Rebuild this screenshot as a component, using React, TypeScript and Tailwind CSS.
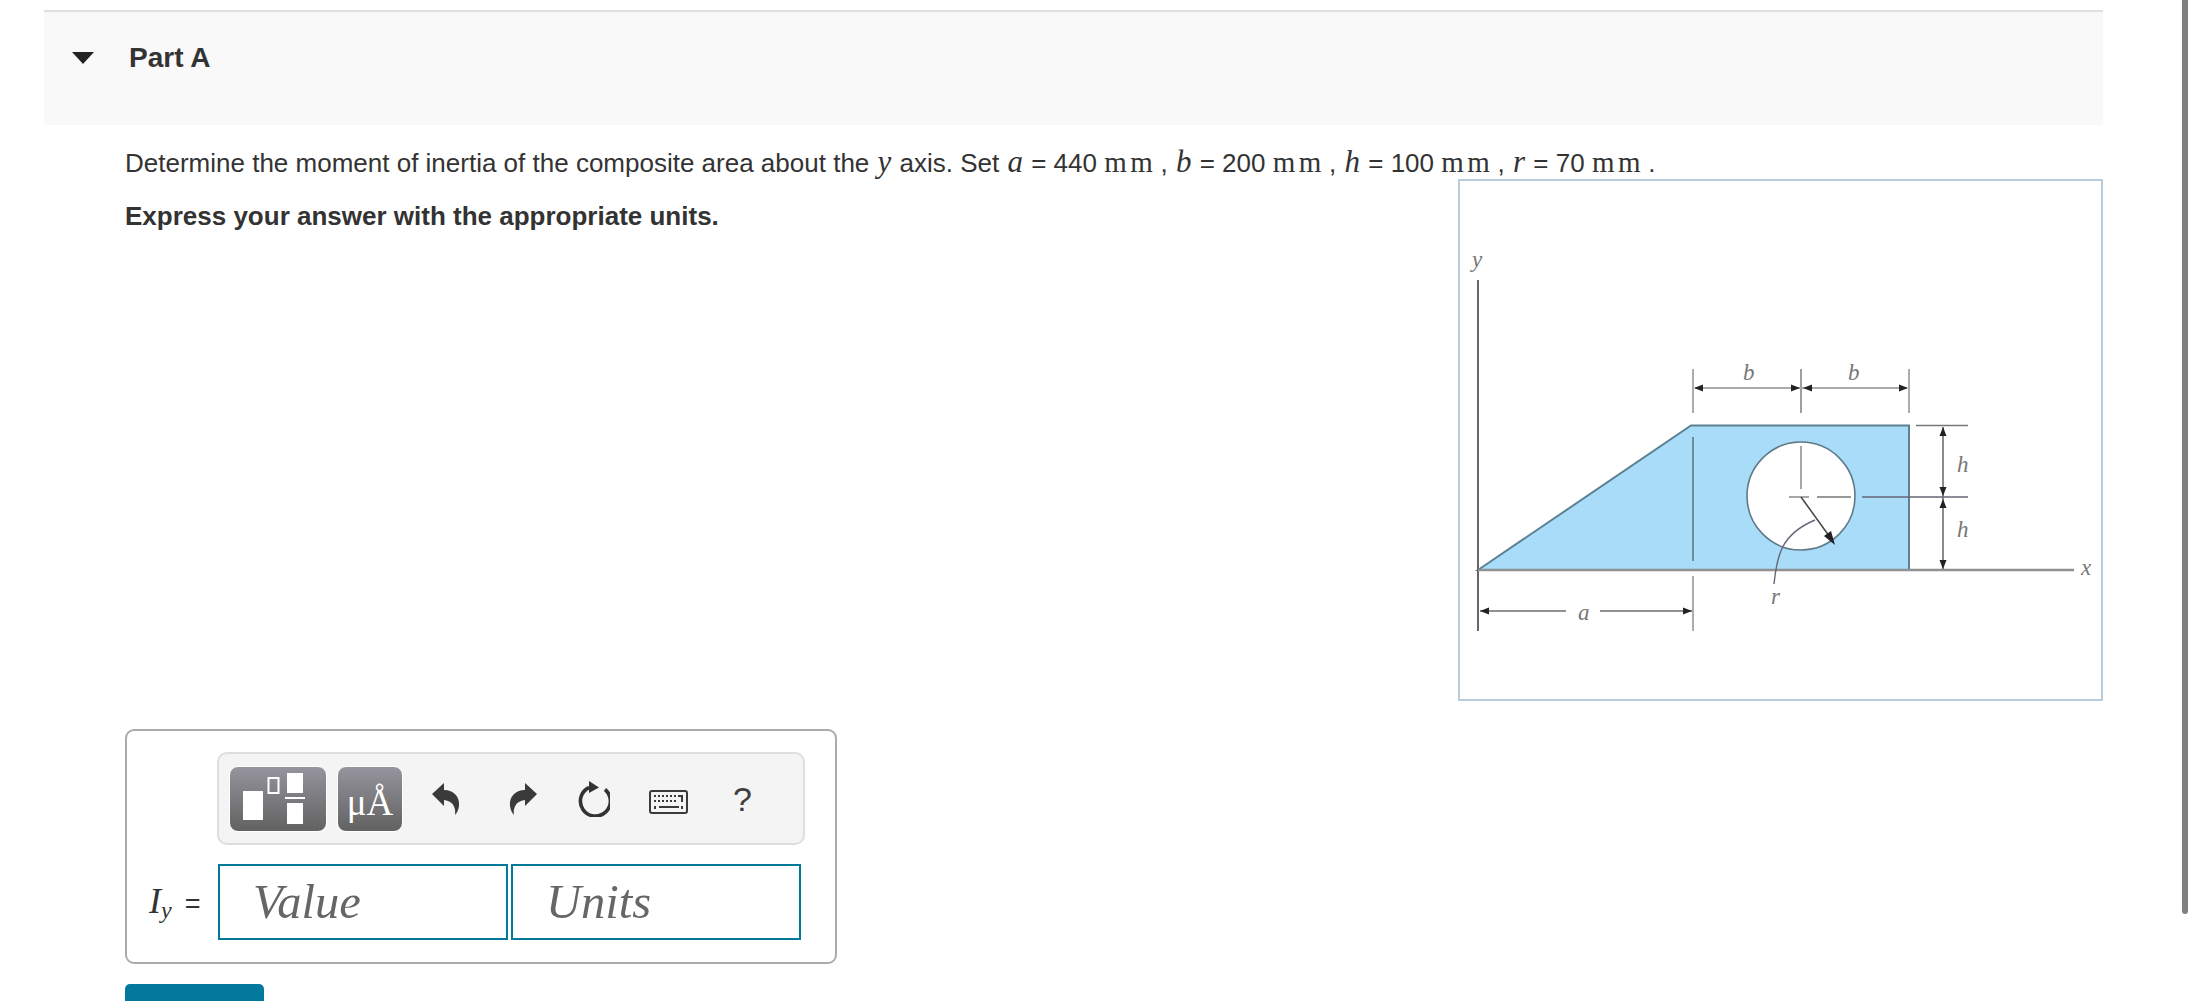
import React from "react";

const M = ({ children }: { children: React.ReactNode }) => (
  <span className="mx-[1px] font-['Liberation_Serif',serif] text-[31px] italic leading-none">{children}</span>
);
const U = ({ children }: { children: React.ReactNode }) => (
  <span className="mr-[-3px] font-['Liberation_Serif',serif] text-[29px] leading-none tracking-[3.5px]">{children}</span>
);

function Figure() {
  const dim = "#6e6e6e";
  const lbl = { fontFamily: "'Liberation Serif', serif", fontStyle: "italic", fontSize: 23, fill: "#777" } as const;
  const Ar = ({ x, y, dir }: { x: number; y: number; dir: "l" | "r" | "u" | "d" }) => {
    const p =
      dir === "l" ? `${x},${y} ${x + 9},${y - 3.5} ${x + 9},${y + 3.5}` :
      dir === "r" ? `${x},${y} ${x - 9},${y - 3.5} ${x - 9},${y + 3.5}` :
      dir === "u" ? `${x},${y} ${x - 3.5},${y + 9} ${x + 3.5},${y + 9}` :
      `${x},${y} ${x - 3.5},${y - 9} ${x + 3.5},${y - 9}`;
    return <polygon points={p} fill="#222" />;
  };
  return (
    <svg width="641" height="518" viewBox="1458 182 641 518" className="block">
      <defs>
        <filter id="soft" x="-5%" y="-5%" width="110%" height="110%">
          <feGaussianBlur stdDeviation="0.6" />
        </filter>
      </defs>
      <g filter="url(#soft)">
        <path d="M1476 571 L1689 426.5 L1907 426.5 L1907 571 Z" fill="#a8dcf8" stroke="#5b8193" strokeWidth="2" />
        <circle cx="1799" cy="497" r="54" fill="#fff" stroke="#5f7a88" strokeWidth="1.6" />
        <line x1="1476" y1="281" x2="1476" y2="632" stroke="#555" strokeWidth="1.8" />
        <line x1="1476" y1="571" x2="2072" y2="571" stroke="#8f9193" strokeWidth="2.5" />
        <line x1="1691" y1="438" x2="1691" y2="562" stroke="#6f8b99" strokeWidth="2" />
        <line x1="1691" y1="577" x2="1691" y2="632" stroke="#999" strokeWidth="1.6" />
        <line x1="1691" y1="370" x2="1691" y2="414" stroke="#999" strokeWidth="1.6" />
        <line x1="1799" y1="370" x2="1799" y2="414" stroke="#888" strokeWidth="1.6" />
        <line x1="1907" y1="370" x2="1907" y2="414" stroke="#999" strokeWidth="1.6" />
        <line x1="1693" y1="389" x2="1905" y2="389" stroke="#aaa" strokeWidth="2" />
        <Ar x={1692} y={389} dir="l" />
        <Ar x={1798} y={389} dir="r" />
        <Ar x={1801} y={389} dir="l" />
        <Ar x={1906} y={389} dir="r" />
        <line x1="1914" y1="426.5" x2="1966" y2="426.5" stroke="#777" strokeWidth="1.4" />
        <line x1="1860" y1="498" x2="1966" y2="498" stroke="#667" strokeWidth="1.4" />
        <line x1="1941" y1="428" x2="1941" y2="570" stroke={dim} strokeWidth="1.6" />
        <Ar x={1941} y={428} dir="u" />
        <Ar x={1941} y={497} dir="d" />
        <Ar x={1941} y={500} dir="u" />
        <Ar x={1941} y={570} dir="d" />
        <line x1="1799" y1="447" x2="1799" y2="490" stroke="#777" strokeWidth="1.3" />
        <line x1="1787" y1="498" x2="1807" y2="498" stroke="#777" strokeWidth="1.3" />
        <line x1="1815" y1="498" x2="1849" y2="498" stroke="#777" strokeWidth="1.3" />
        <line x1="1799" y1="498" x2="1830" y2="541" stroke="#444" strokeWidth="1.5" />
        <polygon points="1833,546 1822,537 1829,532" fill="#222" />
        <path d="M1813 521 C1780 535 1775 555 1772 585" fill="none" stroke="#667" strokeWidth="1.4" />
        <line x1="1478" y1="612" x2="1564" y2="612" stroke={dim} strokeWidth="1.6" />
        <line x1="1598" y1="612" x2="1690" y2="612" stroke={dim} strokeWidth="1.6" />
        <Ar x={1478} y={612} dir="l" />
        <Ar x={1690} y={612} dir="r" />
      </g>
      <text x="1470" y="268" style={lbl}>y</text>
      <text x="1741" y="381" style={lbl}>b</text>
      <text x="1846" y="381" style={lbl}>b</text>
      <text x="1955" y="473" style={lbl}>h</text>
      <text x="1955" y="538" style={lbl}>h</text>
      <text x="2079" y="576" style={lbl}>x</text>
      <text x="1769" y="605" style={lbl}>r</text>
      <text x="1576" y="621" style={lbl}>a</text>
    </svg>
  );
}

function Tmpl() {
  return (
    <svg width="96" height="64" viewBox="0 0 96 64" className="block">
      <rect x="13" y="24" width="20" height="29" fill="#fff" />
      <rect x="38.5" y="11" width="10" height="15" fill="none" stroke="#fff" strokeWidth="2" />
      <rect x="57" y="6" width="16" height="20" fill="#fff" />
      <rect x="55" y="30" width="20" height="2" fill="#fff" />
      <rect x="57" y="36" width="16" height="21" fill="#fff" />
    </svg>
  );
}

function Toolbar() {
  return (
    <div className="ml-[-1px] flex h-[93px] w-[588px] items-center rounded-[10px] border-2 border-[#dedede] bg-[#f4f4f4] pl-[10px]">
      <div className="h-[66px] w-[98px] shrink-0 rounded-[9px] border border-white bg-gradient-to-b from-[#96949d] to-[#626262]">
        <Tmpl />
      </div>
      <div className="ml-[10px] flex h-[66px] w-[66px] shrink-0 items-end justify-center rounded-[9px] border border-white bg-gradient-to-b from-[#96949d] to-[#626262] pb-[6px] font-['Liberation_Serif',serif] text-[37px] leading-[44px] text-white">
        μÅ
      </div>
      <div className="ml-[29px] flex items-center">
        <svg width="28" height="32" viewBox="0 0 28 32" className="block">
          <path d="M0 11 L12 0 L12 7 C22 7 28 14 27 23 C26.5 27 25 30 23 32 C24 26 22 18 12 17 L12 23 Z" fill="#3a3a3a" />
        </svg>
        <svg width="28" height="32" viewBox="0 0 28 32" className="ml-[49px] block">
          <path d="M28 11 L16 0 L16 7 C6 7 0 14 1 23 C1.5 27 3 30 5 32 C4 26 6 18 16 17 L16 23 Z" fill="#3a3a3a" />
        </svg>
        <svg width="34" height="36" viewBox="0 0 34 36" className="ml-[39px] block">
          <path d="M29 8.5 A15 15 0 1 1 13 6.5" fill="none" stroke="#333" strokeWidth="3.6" />
          <polygon points="13,0 23,6.5 13,12" fill="#333" />
        </svg>
        <svg width="39" height="24" viewBox="0 0 39 24" className="ml-[39px] mt-[6px] block">
          <rect x="1" y="1" width="37" height="22" rx="2" fill="#f4f4f4" stroke="#3a3a3a" strokeWidth="2" />
          <path d="M5 5h2v2H5zM9 5h2v2H9zM13 5h2v2h-2zM17 5h2v2h-2zM21 5h2v2h-2zM25 5h2v2h-2zM29 5h5v7h-2V7h-3zM5 10h2v2H5zM9 10h2v2H9zM13 10h2v2h-2zM17 10h2v2h-2zM21 10h2v2h-2zM25 10h2v2h-2zM5 16h2v3H5zM10 16h20v2H10zM32 16h2v3h-2z" fill="#3a3a3a" />
        </svg>
        <span className="ml-[45px] font-['Liberation_Sans',sans-serif] text-[34px] leading-none text-[#3f3f3f]">?</span>
      </div>
    </div>
  );
}

function Field({ text }: { text: string }) {
  return (
    <div className="flex h-[76px] w-[290px] items-center border-2 border-[#047a9a] bg-white pl-[33px] font-['Liberation_Serif',serif] text-[48.5px] italic text-[#666]">
      {text}
    </div>
  );
}

export default function App() {
  return (
    <div className="relative h-[1001px] w-full overflow-hidden bg-white font-['Liberation_Sans',sans-serif] text-[#333]">
      <div className="ml-[44px] mr-[91px] pt-[10px]">
        <div className="flex h-[115px] items-start border-t-2 border-[#e0e0e0] bg-[#f9f9f9] pt-[30px]">
          <svg width="22" height="12" viewBox="0 0 22 12" className="ml-[28px] mt-[10px] block">
            <polygon points="0,0 22,0 11,12" fill="#222" />
          </svg>
          <span className="ml-[35px] text-[28px] font-bold leading-[32px]">Part A</span>
        </div>
        <div className="pl-[81px]">
          <p className="flex h-[54px] items-end whitespace-pre text-[26px] leading-[32px]">
            <span>
              Determine the moment of inertia of the composite area about the <M>y</M> axis. Set <M>a</M> = 440 <U>mm</U> , <M>b</M> = 200 <U>mm</U> , <M>h</M> = 100 <U>mm</U> , <M>r</M> = 70 <U>mm</U> .
            </span>
          </p>
          <div className="float-right h-[522px] w-[645px] border-2 border-[#b9cde0] bg-white">
            <Figure />
          </div>
          <p className="pt-[21px] text-[26px] font-bold leading-[32px]">Express your answer with the appropriate units.</p>
          <div className="clear-both pt-[28px]">
            <div className="h-[235px] w-[712px] rounded-[9px] border-2 border-[#ababab] pl-[91px] pt-[21px]">
              <Toolbar />
              <div className="relative mt-[19px] flex gap-[3px]">
                <span className="absolute left-[-69px] top-[10px] flex items-baseline text-[#333]">
                  <span className="font-['Liberation_Serif',serif] text-[36px] italic">I</span>
                  <span className="relative top-[5px] font-['Liberation_Serif',serif] text-[24px] italic">y</span>
                  <span className="ml-[13px] text-[27px]">=</span>
                </span>
                <Field text="Value" />
                <Field text="Units" />
              </div>
            </div>
            <div className="mt-[20px] h-[40px] w-[139px] rounded-[5px] bg-[#03799e]" />
          </div>
        </div>
      </div>
      <div className="absolute right-[6px] top-0 h-[914px] w-[6px] rounded-b-[3px] bg-[#808080]" />
    </div>
  );
}
